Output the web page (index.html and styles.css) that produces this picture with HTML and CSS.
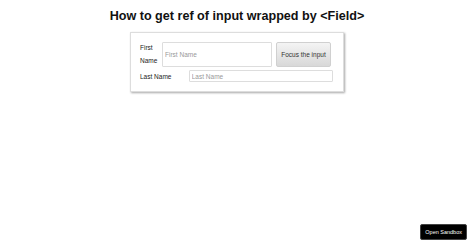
FILE: index.html
```html
<!DOCTYPE html>
<html>
<head>
<meta charset="utf-8">
<link rel="stylesheet" href="styles.css">
</head>
<body>
<h1 class="title">How to get ref of input wrapped by &lt;Field&gt;</h1>
<div class="card">
  <div class="row">
    <label class="label label-wrap">First Name</label>
    <input class="input input-first" placeholder="First Name">
    <button class="btn">Focus the input</button>
  </div>
  <div class="row">
    <label class="label label-last">Last Name</label>
    <input class="input input-last" placeholder="Last Name">
  </div>
</div>
<a class="sandbox">Open Sandbox</a>
</body>
</html>
```
FILE: styles.css
```css
html, body {
  margin: 0;
  padding: 0;
  background: #fff;
  font-family: "Liberation Sans", Arial, sans-serif;
  color: #222;
}
body {
  height: 248px;
  position: relative;
}
.title {
  margin: 0;
  padding-top: 9px;
  font-size: 12.6px;
  line-height: 15px;
  font-weight: bold;
  text-align: center;
  color: #111;
}
.card {
  width: 214px;
  margin: 8px auto 0;
  border: 1px solid #ddd;
  box-shadow: 1px 1px 2px rgba(0,0,0,0.35);
  padding: 8px 10px 9px 9px;
  box-sizing: border-box;
  display: flex;
  flex-direction: column;
  gap: 3px;
}
.row {
  display: flex;
  align-items: center;
}
.label {
  font-size: 6.5px;
  color: #222;
}
.label-wrap {
  width: 22px;
  line-height: 13px;
}
.label-last {
  width: 49px;
}
.input {
  font-family: "Liberation Sans", Arial, sans-serif;
  font-size: 6.5px;
  border: 1px solid #ddd;
  border-radius: 1px;
  padding: 0 2px;
  box-sizing: border-box;
  outline: none;
  color: #333;
}
.input::placeholder {
  color: #999;
}
.input-first {
  width: 110px;
  height: 25px;
}
.input-last {
  width: 145px;
  height: 12px;
}
.btn {
  margin-left: 4px;
  width: 55px;
  height: 25px;
  font-family: "Liberation Sans", Arial, sans-serif;
  font-size: 6.5px;
  color: #333;
  border: 1px solid #d0d0d0;
  border-radius: 2px;
  background: linear-gradient(#f4f4f4, #d8d8d8);
  padding: 0;
}
.sandbox {
  position: absolute;
  right: 7px;
  bottom: 8px;
  background: #000;
  color: #fff;
  font-size: 5.5px;
  line-height: 8px;
  padding: 3px 4px;
  border-radius: 2px;
  border: 1px solid #444;
}
```
